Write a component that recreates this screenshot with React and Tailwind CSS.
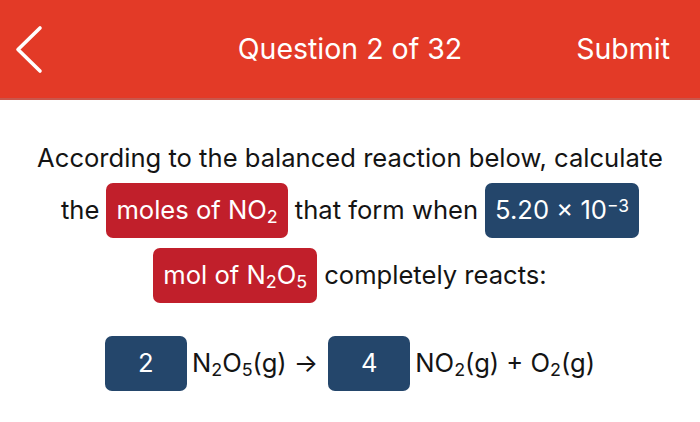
import React from 'react';

const Chip = ({ color, className = '', children }) => (
    <span
        className={`flex h-[55px] items-center rounded-[7px] px-[10px] text-white ${
            color === 'red' ? 'bg-[#c11f2b]' : 'bg-[#24466b]'
        } ${className}`}
    >
        <span>{children}</span>
    </span>
);

const Sub = ({ children }) => (
    <sub className="relative top-[0.22em] align-baseline text-[0.7em]">{children}</sub>
);

const App = () => {
    return (
        <div className="h-[422px] w-[700px] overflow-hidden bg-white font-['Inter','Liberation_Sans',sans-serif] text-[#141414]">
            {/* header */}
            <div className="grid h-[100px] grid-cols-[1fr_auto_1fr] items-center border-b-2 border-[#c9564b] bg-[#e33a27] text-white">
                <div className="pl-[14px]">
                    <svg width="32" height="50" viewBox="0 0 32 50" fill="none">
                        <polyline
                            points="26,4 4,25.5 26,47"
                            stroke="white"
                            strokeWidth="3.6"
                            strokeLinecap="round"
                            strokeLinejoin="round"
                        />
                    </svg>
                </div>
                <div className="text-[28.5px]">Question 2 of 32</div>
                <div className="pr-[30px] text-right text-[28.5px]">Submit</div>
            </div>

            {/* question */}
            <div className="flex flex-col items-center pt-[38px] text-[25.6px]">
                <div className="flex h-[40px] items-center">
                    According to the balanced reaction below, calculate
                </div>
                <div className="mt-[5px] flex items-center gap-[7px]">
                    <span>the</span>
                    <Chip color="red">
                        moles of NO<Sub>2</Sub>
                    </Chip>
                    <span>that form when</span>
                    <Chip color="blue">
                        5.20 × 10<sup className="relative -top-[0.42em] align-baseline text-[0.68em]">−3</sup>
                    </Chip>
                </div>
                <div className="mt-[10px] flex items-center gap-[7px]">
                    <Chip color="red">
                        mol of N<Sub>2</Sub>O<Sub>5</Sub>
                    </Chip>
                    <span>completely reacts:</span>
                </div>

                {/* equation */}
                <div className="mt-[33px] flex items-center gap-[5px]">
                    <Chip color="blue" className="w-[82px] justify-center">2</Chip>
                    <span className="mr-[5px]">
                        N<Sub>2</Sub>O<Sub>5</Sub>(g) →
                    </span>
                    <Chip color="blue" className="w-[82px] justify-center">4</Chip>
                    <span>
                        NO<Sub>2</Sub>(g) + O<Sub>2</Sub>(g)
                    </span>
                </div>
            </div>
        </div>
    );
};

export default App;
